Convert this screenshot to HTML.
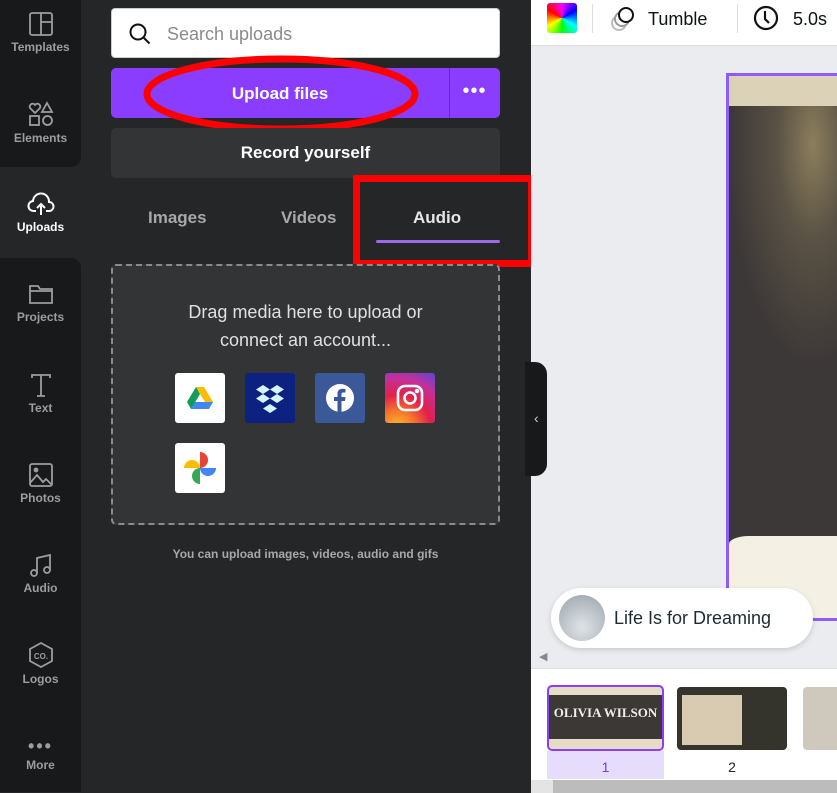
<!DOCTYPE html>
<html><head><meta charset="utf-8"><style>
*{box-sizing:border-box;margin:0;padding:0}
body{width:837px;height:792px;overflow:hidden;background:#252627;font-family:"Liberation Sans",sans-serif;position:relative}
.abs{position:absolute}
.side{left:0;top:0;width:81px;height:792px;background:#252627}
.blk{position:absolute;left:0;width:81px;background:#18191b}
.item{position:absolute;left:0;width:81px;text-align:center;color:#9c9d9f;font-size:12px;font-weight:bold}
.item svg{display:block;margin:0 auto 3px}
.panel{left:81px;top:0;width:450px;height:792px;background:#252627}
</style></head><body>
<div class="abs side">
  <div class="blk" style="top:0;height:167px;border-bottom-right-radius:10px"></div>
  <div class="blk" style="top:258px;height:534px;border-top-right-radius:10px"></div>
  <div class="item" style="top:11px"><svg width="26" height="26" viewBox="0 0 26 26" fill="none" stroke="#9c9d9f" stroke-width="1.8"><rect x="2" y="2" width="22" height="22" rx="2"/><path d="M13 2v22M13 11h11"/></svg>Templates</div>
  <div class="item" style="top:100px"><svg width="28" height="28" viewBox="0 0 28 28" fill="none" stroke="#9c9d9f" stroke-width="1.8"><path d="M8 13l-5-5a3 3 0 014-4l1 1 1-1a3 3 0 014 4z"/><path d="M20 3l5 9h-10z"/><rect x="3" y="16" width="9" height="9"/><circle cx="20.5" cy="20.5" r="4.5"/></svg>Elements</div>
  <div class="item" style="top:191px;color:#fff"><svg width="28" height="26" viewBox="0 0 28 26" fill="none" stroke="#fff" stroke-width="2"><path d="M9 20H7a5 5 0 01-1-10 8 8 0 0116 1 4.5 4.5 0 010 9h-3"/><path d="M14 24V13M10 17l4-4 4 4"/></svg>Uploads</div>
  <div class="item" style="top:281px"><svg width="28" height="26" viewBox="0 0 28 26" fill="none" stroke="#9c9d9f" stroke-width="1.8"><path d="M3 5h8l2 3h12v14H3z M3 10h22"/></svg>Projects</div>
  <div class="item" style="top:372px"><svg width="26" height="26" viewBox="0 0 26 26" fill="none" stroke="#9c9d9f" stroke-width="1.8"><path d="M4 6V3h18v3M13 3v21M9 24h8"/></svg>Text</div>
  <div class="item" style="top:462px"><svg width="26" height="26" viewBox="0 0 26 26" fill="none" stroke="#9c9d9f" stroke-width="1.8"><rect x="2" y="2" width="22" height="22" rx="2"/><circle cx="8" cy="8" r="1.5" fill="#9c9d9f"/><path d="M2 21l7-8 6 7 3-3 6 6"/></svg>Photos</div>
  <div class="item" style="top:552px"><svg width="26" height="26" viewBox="0 0 26 26" fill="none" stroke="#9c9d9f" stroke-width="1.8"><path d="M9 21V6l13-3v15"/><circle cx="6" cy="21" r="3"/><circle cx="19" cy="18" r="3"/></svg>Audio</div>
  <div class="item" style="top:641px"><svg width="28" height="28" viewBox="0 0 28 28" fill="none" stroke="#9c9d9f" stroke-width="1.8"><path d="M14 2l11 6v12l-11 6-11-6V8z"/><text x="14" y="18" font-size="8" fill="#9c9d9f" stroke="none" text-anchor="middle" font-family="Liberation Sans" font-weight="bold">CO.</text></svg>Logos</div>
  <div class="item" style="top:740px"><div style="font-size:18px;letter-spacing:2px;line-height:12px;height:18px">•••</div>More</div>
</div>
<div class="abs panel">
  <div class="abs" style="left:30px;top:8px;width:389px;height:50px;background:#fff;border-radius:4px;border:1px solid #ccc">
    <svg class="abs" style="left:16px;top:13px" width="24" height="24" viewBox="0 0 24 24" fill="none" stroke="#111" stroke-width="2"><circle cx="10" cy="10" r="7.5"/><path d="M15.5 15.5l6 6"/></svg>
    <div class="abs" style="left:55px;top:15px;font-size:18px;color:#8a8a8a">Search uploads</div>
  </div>
  <div class="abs" style="left:30px;top:68px;width:389px;height:50px;background:#8b3dff;border-radius:5px">
    <div class="abs" style="left:0;width:338px;top:16px;text-align:center;color:#fff;font-weight:bold;font-size:17px">Upload files</div>
    <div class="abs" style="left:338px;top:0;width:1px;height:50px;background:#6a25d0"></div>
    <div class="abs" style="left:338px;width:51px;top:12px;text-align:center;color:#fff;font-size:20px;letter-spacing:1px">•••</div>
  </div>
  <svg class="abs" style="left:55px;top:52px" width="290" height="86"><ellipse cx="145" cy="42" rx="134" ry="35" fill="none" stroke="#f00" stroke-width="7"/></svg>
  <div class="abs" style="left:30px;top:128px;width:389px;height:50px;background:#333436;border-radius:5px;color:#fff;font-weight:bold;font-size:17px;text-align:center;line-height:50px">Record yourself</div>
  <div class="abs" style="left:67px;top:208px;color:#a7a8aa;font-weight:bold;font-size:17px">Images</div>
  <div class="abs" style="left:200px;top:208px;color:#a7a8aa;font-weight:bold;font-size:17px">Videos</div>
  <div class="abs" style="left:332px;top:208px;color:#e6e6e6;font-weight:bold;font-size:17px">Audio</div>
  <div class="abs" style="left:295px;top:240px;width:124px;height:3px;background:#9a6ae8;border-radius:2px"></div>
  <div class="abs" style="left:272px;top:175px;width:182px;height:92px;border:7px solid #f00;border-radius:2px"></div>
  <div class="abs" style="left:30px;top:264px;width:389px;height:261px;background:#333436;border:2px dashed #8a8b8d;border-radius:5px"></div>
  <div class="abs" style="left:30px;top:298px;width:389px;text-align:center;color:#e0e0e0;font-size:18px;line-height:28px">Drag media here to upload or<br>connect an account...</div>
  <div class="abs" style="left:94px;top:373px;width:50px;height:50px;background:#fff;border-radius:3px">
    <svg style="position:absolute;left:12px;top:14px" width="26" height="22" viewBox="0 0 26 22"><path d="M9 0h8l9 15h-8z" fill="#fbbc04"/><path d="M9 0l4 7-9 15-4-7z" fill="#0f9d58"/><path d="M4 22l4-7h18l-4 7z" fill="#4285f4"/></svg>
  </div>
  <div class="abs" style="left:164px;top:373px;width:50px;height:50px;background:#0d2180;border-radius:3px">
    <svg style="position:absolute;left:10px;top:12px" width="30" height="28" viewBox="0 0 30 28" fill="#d6f4ff"><path d="M8 0l7 4.5-7 4.5-7-4.5zM22 0l7 4.5-7 4.5-7-4.5zM8 9l7 4.5-7 4.5-7-4.5zM22 9l7 4.5-7 4.5-7-4.5zM15 19l7 4.5-7 4.5-7-4.5z"/></svg>
  </div>
  <div class="abs" style="left:234px;top:373px;width:50px;height:50px;background:#3b5998;border-radius:3px">
    <svg style="position:absolute;left:11px;top:11px" width="28" height="28" viewBox="0 0 28 28"><circle cx="14" cy="14" r="14" fill="#fff"/><path d="M15.5 28V17h3.5l.5-4h-4v-2.5c0-1.2.4-2 2-2h2V5a25 25 0 00-3-.2c-3 0-5 1.8-5 5V13H8v4h3.5v11z" fill="#3b5998"/></svg>
  </div>
  <div class="abs" style="left:304px;top:373px;width:50px;height:50px;border-radius:3px;background:radial-gradient(circle at 25% 110%,#fdc02f 0%,#f5792a 25%,#e2204b 50%,#c3309a 75%,#5849d6 100%)">
    <svg style="position:absolute;left:11px;top:11px" width="28" height="28" viewBox="0 0 28 28" fill="none" stroke="#fff" stroke-width="2.6"><rect x="2" y="2" width="24" height="24" rx="7"/><circle cx="14" cy="14" r="5.5"/><circle cx="21" cy="7" r="1" fill="#fff"/></svg>
  </div>
  <div class="abs" style="left:94px;top:443px;width:50px;height:50px;background:#fff;border-radius:3px">
    <svg style="position:absolute;left:6px;top:6px" width="38" height="38" viewBox="0 0 38 38"><path d="M19 19V3a8 8 0 010 16z" fill="#ea4335"/><path d="M19 19h16a8 8 0 01-16 0z" fill="#4285f4"/><path d="M19 19v16a8 8 0 010-16z" fill="#34a853"/><path d="M19 19H3a8 8 0 0116 0z" fill="#fbbc04"/></svg>
  </div>
  <div class="abs" style="left:30px;top:547px;width:389px;text-align:center;color:#a7a8aa;font-weight:bold;font-size:12px">You can upload images, videos, audio and gifs</div>
</div>
<!-- right area -->
<div class="abs" style="left:531px;top:0;width:306px;height:792px;background:#ebecf0">
  <div class="abs" style="left:0;top:0;width:306px;height:46px;background:#fff;border-bottom:1px solid #dcdde0"></div>
  <div class="abs" style="left:16px;top:3px;width:30px;height:30px;border-radius:3px;background:conic-gradient(from 0deg,#f0f,#00f,#0ff,#0f0,#ff0,#f00,#f0f)"></div>
  <div class="abs" style="left:61px;top:4px;width:1px;height:29px;background:#ddd"></div>
  <svg class="abs" style="left:78px;top:4px" width="28" height="28" viewBox="0 0 28 28" fill="none" stroke-width="2"><circle cx="10" cy="19" r="7" stroke="#bbb"/><circle cx="13" cy="15" r="7" stroke="#999" fill="#fff"/><circle cx="17" cy="11" r="7" stroke="#111" fill="#fff"/></svg>
  <div class="abs" style="left:117px;top:9px;font-size:18px;color:#0e1318">Tumble</div>
  <div class="abs" style="left:206px;top:4px;width:1px;height:29px;background:#ddd"></div>
  <svg class="abs" style="left:222px;top:5px" width="26" height="26" viewBox="0 0 26 26" fill="none" stroke="#111" stroke-width="2.2"><circle cx="13" cy="13" r="11"/><path d="M12 6v8l4 4"/></svg>
  <div class="abs" style="left:262px;top:9px;font-size:18px;color:#0e1318">5.0s</div>
  <div class="abs" style="left:195px;top:73px;width:120px;height:548px;border:3px solid #8b5cf6;background:#3d3838;overflow:hidden">
    <div class="abs" style="left:0;top:0;width:120px;height:40px;background:#dcd2b8"></div>
    <div class="abs" style="left:0;top:30px;width:120px;height:260px;background:radial-gradient(ellipse at 70% 15%,#8c7e5c 0%,#5a5245 30%,#3d3838 70%)"></div>
    <div class="abs" style="left:0;top:460px;width:120px;height:100px;background:#f4f0e4;border-top-left-radius:20px 8px"></div>
  </div>
  <div class="abs" style="left:20px;top:588px;width:262px;height:60px;background:#fff;border-radius:30px;box-shadow:0 2px 6px rgba(0,0,0,.15)">
    <div class="abs" style="left:8px;top:7px;width:46px;height:46px;border-radius:50%;background:radial-gradient(circle at 50% 70%,#dfe3e6,#9aa3aa)"></div>
    <div class="abs" style="left:63px;top:20px;font-size:18px;color:#1d2a33">Life Is for Dreaming</div>
  </div>
  <div class="abs" style="left:8px;top:650px;color:#888;font-size:11px">◀</div>
  <div class="abs" style="left:0;top:668px;width:306px;height:124px;background:#fff;border-top:1px solid #ddd">
    <div class="abs" style="left:16px;top:16px;width:117px;height:66px;border:2px solid #8b3dff;border-radius:5px;background:#3b3835;overflow:hidden">
      <div class="abs" style="left:0;top:0;width:117px;height:8px;background:#e5dcc5"></div>
      <div class="abs" style="left:0;top:52px;width:117px;height:12px;background:#e5dcc5"></div>
      <div style="margin-top:18px;text-align:center;color:#eee;font-family:'Liberation Serif',serif;font-size:13px;font-weight:bold">OLIVIA WILSON</div>
    </div>
    <div class="abs" style="left:16px;top:82px;width:117px;height:28px;background:#e6dcfc"></div>
    <div class="abs" style="left:16px;top:90px;width:117px;text-align:center;color:#7c3aed;font-size:14px">1</div>
    <div class="abs" style="left:146px;top:18px;width:110px;height:63px;border-radius:4px;background:#34332c;overflow:hidden"><div class="abs" style="left:5px;top:8px;width:60px;height:50px;background:#d8cbb2"></div></div>
    <div class="abs" style="left:146px;top:90px;width:110px;text-align:center;color:#222;font-size:14px">2</div>
    <div class="abs" style="left:272px;top:18px;width:40px;height:63px;border-radius:4px;background:#cfc8bd"></div>
    <div class="abs" style="left:0;top:111px;width:306px;height:13px;background:#e4e4e4"></div>
    <div class="abs" style="left:22px;top:111px;width:284px;height:13px;background:#bcbcbc"></div>
  </div>
</div>
<!-- collapse tab -->
<div class="abs" style="left:525px;top:362px;width:22px;height:114px;background:#18191b;border-radius:0 12px 12px 0"></div>
<div class="abs" style="left:534px;top:410px;color:#ccc;font-size:14px">‹</div>
</body></html>
